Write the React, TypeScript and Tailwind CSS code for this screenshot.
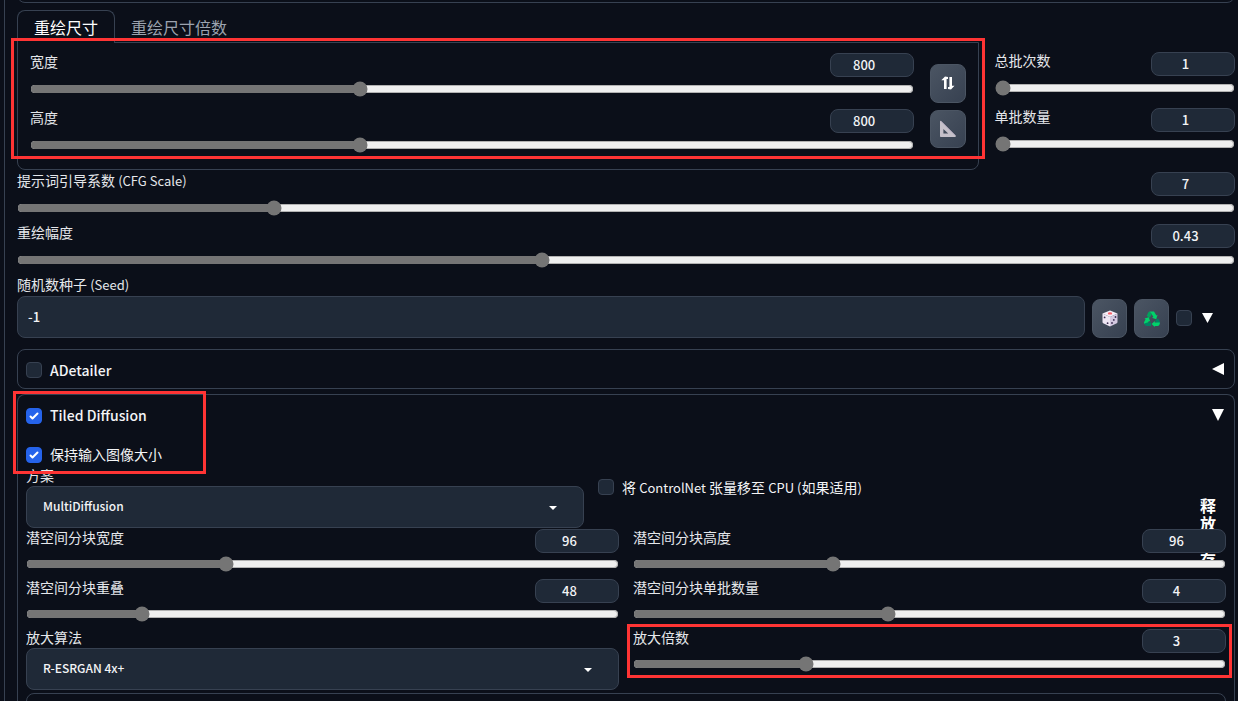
import { useId, useState, type ReactNode } from "react"
import clsx from "clsx"

type SliderProps = {
  label: ReactNode
  name: string
  min: number
  max: number
  step?: number
  initial: number
  dense?: boolean
}

function Slider({ label, name, min, max, step = 1, initial, dense }: SliderProps) {
  const id = useId()
  const [value, setValue] = useState(initial)

  return (
    <div className={clsx("flex flex-col", dense ? "gap-[3px]" : "gap-1")}>
      <div className="flex items-start justify-between">
        <label htmlFor={id} className="leading-4 text-[#e5e7eb]">
          {label}
        </label>
        <input
          type="number"
          aria-label={`${name} 数值`}
          min={min}
          max={max}
          step={step}
          value={value}
          onChange={(e) => setValue(Number(e.target.value))}
          className="h-6 w-[84px] rounded-lg border border-[#374151] bg-[#1f2937] pb-px text-center text-[13px] font-medium outline-none"
        />
      </div>
      <input
        id={id}
        type="range"
        min={min}
        max={max}
        step={step}
        value={value}
        onChange={(e) => setValue(Number(e.target.value))}
        className="block h-4 w-full accent-[#757575]"
      />
    </div>
  )
}

// latin words sit a size below the chinese text around them
function Latin({ children }: { children: ReactNode }) {
  return <span className="text-[13px] leading-none">{children}</span>
}

function Check({ id, label, checked = false }: { id: string; label?: string; checked?: boolean }) {
  return (
    <span className="grid size-4 shrink-0">
      <input
        id={id}
        type="checkbox"
        aria-label={label}
        defaultChecked={checked}
        className="peer size-4 appearance-none rounded border border-[#374151] bg-[#1f2937] [grid-area:1/1] checked:border-[#2563eb] checked:bg-[#2563eb]"
      />
      <svg
        viewBox="0 0 16 16"
        className="pointer-events-none invisible size-4 fill-white [grid-area:1/1] peer-checked:visible"
      >
        <path d="M12.207 4.793a1 1 0 010 1.414l-5 5a1 1 0 01-1.414 0l-2-2a1 1 0 011.414-1.414L6.5 9.086l4.293-4.293a1 1 0 011.414 0z" />
      </svg>
    </span>
  )
}

function Dropdown({ label, options }: { label: string; options: string[] }) {
  const id = useId()
  return (
    <div className="flex flex-col gap-[3px]">
      <label htmlFor={id} className="leading-4 text-[#e5e7eb]">
        {label}
      </label>
      <div className="relative">
        <select
          id={id}
          className="h-[42px] w-full appearance-none rounded-lg border border-[#374151] bg-[#1f2937] px-4 pb-0.5 text-xs font-medium outline-none"
        >
          {options.map((o) => (
            <option key={o}>{o}</option>
          ))}
        </select>
        <svg viewBox="0 0 8 4" className="pointer-events-none absolute top-5 right-[27px] h-1 w-2 fill-white">
          <path d="M0 0h8L4 4z" />
        </svg>
      </div>
    </div>
  )
}

function ToolButton({ label, className, children }: { label: string; className?: string; children: ReactNode }) {
  return (
    <button
      type="button"
      aria-label={label}
      className={clsx(
        "flex items-center justify-center rounded-lg border border-[#4b5563] bg-linear-to-br from-[#4b5563] to-[#374151]",
        className,
      )}
    >
      {children}
    </button>
  )
}

function SwapIcon() {
  return (
    <svg viewBox="0 0 14 14" className="mb-0.5 size-3.5 fill-white">
      <path d="M0.5 4L4 0.5L7 1V3H5.6V13H3V4.2H0.5z" />
      <path d="M8.4 1H11V9.8H13.5L10 13.5L7 13V11H8.4z" />
    </svg>
  )
}

function RulerIcon() {
  return (
    <svg viewBox="0 0 18 18" className="size-[18px]">
      <path
        fill="#c5c0c9"
        fillRule="evenodd"
        d="M1 1.6Q1 .4 2 1L16.6 15.4Q17.3 17 16 17H1.8Q1 17 1 16.2zM4.4 9V13.6H9.2z"
      />
      <path d="M2 1.2L16.4 15.6" stroke="#a79fb5" strokeWidth="1" />
    </svg>
  )
}

function DiceIcon() {
  return (
    <svg viewBox="0 0 16 17" className="h-[17px] w-4">
      <path d="M8 .5L15.5 3.6L8 7L.5 3.6z" fill="#f5eef8" />
      <path d="M.5 3.6L8 7V16.5L1.2 13.2Q.5 12.8 .5 12z" fill="#eee6f3" />
      <path d="M15.5 3.6L8 7V16.5L14.8 13.2Q15.5 12.8 15.5 12z" fill="#d3c8e0" />
      <ellipse cx="8" cy="3.4" rx="2.2" ry="1.2" fill="#f8616b" />
      <g fill="#3b2d52">
        <circle cx="2.6" cy="7.4" r=".9" />
        <circle cx="5.6" cy="13.2" r=".9" />
        <circle cx="13.5" cy="7" r=".9" />
        <circle cx="11.8" cy="9.9" r=".9" />
        <circle cx="10" cy="13" r=".9" />
      </g>
    </svg>
  )
}

function RecycleIcon() {
  return (
    <svg viewBox="0 0 16 16" className="size-4">
      <path d="M5.4.6H10L12.4 4.4L13.6 3.8L12.2 8.2L8 6.8L9.4 6L7.6 3z" fill="#00d26a" />
      <path d="M5.4.6L7.8 3L5.8 6.8L2.6 5L4.2 1.6z" fill="#00a35c" />
      <path d="M11 9.4L14.2 7.6L15.8 10.6Q16.4 13.4 14 13.8z" fill="#008463" />
      <path d="M15.9 11.4Q15.8 14.8 13.6 15H10.8V16L7.6 13.1L10.8 9.9V11.4H14z" fill="#00d26a" />
      <path d="M1.6 8.2L.4 7.5L4.8 6.2L6.2 10.6L4.9 9.9L3.2 13.6L.4 13Q-.4 11.6 .4 10.4z" fill="#00d26a" />
      <path d="M3.4 11.4H7V15H2.6Q.6 14.8.3 12.6z" fill="#008463" />
    </svg>
  )
}

function Arrow({ open, className }: { open?: boolean; className: string }) {
  return (
    <svg viewBox="0 0 12 12" preserveAspectRatio="none" className={clsx("shrink-0 fill-white", className)}>
      <path d={open ? "M0 0H12L6 12z" : "M12 0V12L0 6z"} />
    </svg>
  )
}

// red frame drawn over a group of settings
function Highlight({ className }: { className: string }) {
  return <div className={clsx("pointer-events-none absolute z-10 border-3 border-[#ff3434]", className)} />
}

export default function App() {
  return (
    <main className="h-screen overflow-hidden bg-[#0b0f19] pl-1 font-['Noto_Sans_CJK_SC',sans-serif] text-sm text-[#f3f4f6]">
      <div className="min-h-full border-l border-[#374151] pr-[3px] pl-3">
        <div className="flex h-[3px] items-end overflow-hidden">
          <div className="h-8 w-full shrink-0 rounded-lg border border-[#374151]" />
        </div>

        <section className="flex gap-4 pt-[7px]">
          <div className="min-w-0 flex-[4]">
            <div role="tablist" className="flex h-8 text-base">
              <button
                role="tab"
                aria-selected="true"
                className="z-[1] -mb-px rounded-t-lg border border-b-0 border-[#374151] bg-[#0b0f19] px-4 text-white"
              >
                重绘尺寸
              </button>
              <button role="tab" aria-selected="false" className="px-4 pt-px text-[#9ca3af]">
                重绘尺寸倍数
              </button>
            </div>
            <div className="relative flex gap-4 rounded-b-lg border border-[#374151] px-3 pt-2.5 pb-4">
              <div className="flex flex-1 flex-col gap-3">
                <Slider label="宽度" name="宽度" min={64} max={2048} initial={800} />
                <Slider label="高度" name="高度" min={64} max={2048} initial={800} />
              </div>
              <div className="flex flex-col gap-[7px] pt-[11px]">
                <ToolButton label="交换宽高" className="h-[39px] w-9">
                  <SwapIcon />
                </ToolButton>
                <ToolButton label="自动检测尺寸" className="h-[38px] w-9">
                  <RulerIcon />
                </ToolButton>
              </div>
              <Highlight className="-inset-x-[7px] -top-[5px] bottom-2.5" />
            </div>
          </div>
          <div className="flex min-w-0 flex-1 flex-col gap-3 pt-[42px]">
            <Slider label="总批次数" name="总批次数" min={1} max={100} initial={1} />
            <Slider label="单批数量" name="单批数量" min={1} max={8} initial={1} />
          </div>
        </section>

        <section className="flex flex-col gap-2 pt-0.5">
          <Slider
            label={
              <>
                提示词引导系数 <Latin>(CFG Scale)</Latin>
              </>
            }
            name="CFG Scale"
            min={1}
            max={30}
            step={0.5}
            initial={7}
          />
          <Slider label="重绘幅度" name="重绘幅度" min={0} max={1} step={0.01} initial={0.43} />
          <div className="flex items-end gap-[7px]">
            <div className="flex flex-1 flex-col gap-1">
              <label htmlFor="seed" className="leading-4 text-[#e5e7eb]">
                随机数种子 <Latin>(Seed)</Latin>
              </label>
              <input
                id="seed"
                type="text"
                defaultValue="-1"
                className="h-[42px] w-full rounded-lg border border-[#374151] bg-[#1f2937] px-2.5 pb-0.5 text-[13px] font-medium outline-none"
              />
            </div>
            <ToolButton label="随机种子" className="h-[39px] w-[35px]">
              <DiceIcon />
            </ToolButton>
            <ToolButton label="重用种子" className="h-[39px] w-[35px]">
              <RecycleIcon />
            </ToolButton>
            <div className="flex h-10 w-[59px] items-center gap-2.5">
              <Check id="seed-extra" label="更多种子选项" />
              <Arrow open className="h-2.5 w-[11px]" />
            </div>
          </div>
        </section>

        <section className="mt-[11px] flex h-10 items-center justify-between rounded-lg border border-[#374151] pr-2.5 pl-2">
          <label htmlFor="adetailer" className="flex items-center gap-2 pt-0.5 font-medium">
            <Check id="adetailer" />
            ADetailer
          </label>
          <Arrow className="size-3" />
        </section>

        <section className="mt-[5px] rounded-t-lg border border-b-0 border-[#374151] px-2">
          <div className="flex items-start justify-between pr-0.5">
            <div className="relative flex h-[72px] w-[180px] flex-col gap-[17px] pt-2.5">
              <label htmlFor="tiled" className="flex h-[22px] items-center gap-2 font-medium">
                <Check id="tiled" checked />
                <span className="pb-0.5">Tiled Diffusion</span>
              </label>
              <label htmlFor="keep-size" className="flex h-[22px] items-center gap-2">
                <Check id="keep-size" checked />
                <span className="pb-0.5">保持输入图像大小</span>
              </label>
              <Highlight className="-top-1 -bottom-[7px] -left-[13px] right-0" />
            </div>
            <Arrow open className="mt-3.5 size-3" />
          </div>

          <div className="flex gap-3.5">
            <div className="flex-1">
              <Dropdown label="方案" options={["MultiDiffusion", "Mixture of Diffusers"]} />
            </div>
            <label htmlFor="controlnet-cpu" className="flex h-10 flex-1 items-center gap-2">
              <Check id="controlnet-cpu" />
              <span>
                将 <Latin>ControlNet</Latin> 张量移至 <Latin>CPU (</Latin>如果适用<Latin>)</Latin>
              </span>
            </label>
            <div className="flex h-[61px] w-14 items-start justify-end pt-[29px] pr-2.5">
              <button type="button" className="w-4 text-base leading-[18px] font-bold break-all text-white">
                释放显存
              </button>
            </div>
          </div>

          <div className="grid grid-cols-2 gap-x-3.5 gap-y-[7px] pt-px">
            <Slider dense label="潜空间分块宽度" name="潜空间分块宽度" min={16} max={256} initial={96} />
            <Slider dense label="潜空间分块高度" name="潜空间分块高度" min={16} max={256} initial={96} />
            <Slider dense label="潜空间分块重叠" name="潜空间分块重叠" min={0} max={256} initial={48} />
            <Slider dense label="潜空间分块单批数量" name="潜空间分块单批数量" min={1} max={8} initial={4} />
            <Dropdown label="放大算法" options={["R-ESRGAN 4x+", "Lanczos", "Nearest"]} />
            <div className="relative">
              <Slider dense label="放大倍数" name="放大倍数" min={1} max={8} step={0.05} initial={3} />
              <Highlight className="-inset-x-1.5 -top-[5px] h-[54px]" />
            </div>
          </div>

          <div className="mt-[3px] h-10 rounded-lg border border-[#374151]" />
        </section>
      </div>
    </main>
  )
}
